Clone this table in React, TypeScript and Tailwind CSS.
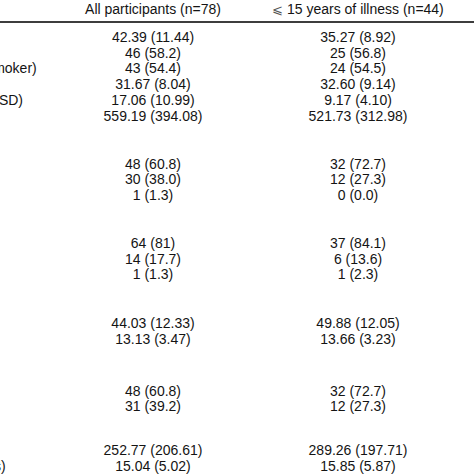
import React from 'react';

type Row = { label: string; all: string; short: string };
type Group = { gap: string; rows: Row[] };

// Only the long labels reach into the visible area; the label column starts off-screen.
const groups: Group[] = [
  {
    gap: 'mt-0',
    rows: [
      { label: '', all: '42.39 (11.44)', short: '35.27 (8.92)' },
      { label: '', all: '46 (58.2)', short: '25 (56.8)' },
      { label: 'Smoking status, n (% smoker)', all: '43 (54.4)', short: '24 (54.5)' },
      { label: '', all: '31.67 (8.04)', short: '32.60 (9.14)' },
      { label: 'Years of illness, mean  (SD)', all: '17.06 (10.99)', short: '9.17 (4.10)' },
      { label: '', all: '559.19 (394.08)', short: '521.73 (312.98)' },
    ],
  },
  {
    gap: 'mt-[32.3px]',
    rows: [
      { label: '', all: '48 (60.8)', short: '32 (72.7)' },
      { label: '', all: '30 (38.0)', short: '12 (27.3)' },
      { label: '', all: '1 (1.3)', short: '0 (0.0)' },
    ],
  },
  {
    gap: 'mt-[32.4px]',
    rows: [
      { label: '', all: '64 (81)', short: '37 (84.1)' },
      { label: '', all: '14 (17.7)', short: '6 (13.6)' },
      { label: '', all: '1 (1.3)', short: '1 (2.3)' },
    ],
  },
  {
    gap: 'mt-[32.9px]',
    rows: [
      { label: '', all: '44.03 (12.33)', short: '49.88 (12.05)' },
      { label: '', all: '13.13 (3.47)', short: '13.66 (3.23)' },
    ],
  },
  {
    gap: 'mt-[36.1px]',
    rows: [
      { label: '', all: '48 (60.8)', short: '32 (72.7)' },
      { label: '', all: '31 (39.2)', short: '12 (27.3)' },
    ],
  },
  {
    gap: 'mt-[28.1px]',
    rows: [
      { label: '', all: '252.77 (206.61)', short: '289.26 (197.71)' },
      { label: 'Formal education (years)', all: '15.04 (5.02)', short: '15.85 (5.87)' },
    ],
  },
];

const TableRow: React.FC<{ row: Row }> = ({ row }) => (
  <div className="flex leading-[15.7px]">
    <div className="w-[200px] whitespace-pre">{row.label}</div>
    <div className="w-[206px] text-center whitespace-nowrap">{row.all}</div>
    <div className="w-[204px] text-center whitespace-nowrap">{row.short}</div>
    <div className="w-[200px]" />
  </div>
);

export default function App() {
  return (
    <div className="w-[474px] h-[474px] overflow-hidden bg-white text-[#141414] text-[14px] font-['Liberation_Sans','Arial',sans-serif]">
      <div className="-ml-[150px] w-[810px]">
        {/* Header */}
        <div className="flex pt-[1px] pb-[3px] leading-[16px] border-b-2 border-[#3d3d3d]">
          <div className="w-[200px]" />
          <div className="w-[206px] text-center whitespace-nowrap">All participants (n=78)</div>
          <div className="w-[204px] text-center whitespace-nowrap">
            <span className="text-[#555] font-['DejaVu_Sans',sans-serif] text-[13px]">⩽</span> 15 years of illness (n=44)
          </div>
          <div className="w-[200px]" />
        </div>

        {/* Body */}
        <div className="pt-[7px]">
          {groups.map((g, i) => (
            <div key={i} className={g.gap}>
              {g.rows.map((r, j) => (
                <TableRow key={j} row={r} />
              ))}
            </div>
          ))}
        </div>
      </div>
    </div>
  );
}
